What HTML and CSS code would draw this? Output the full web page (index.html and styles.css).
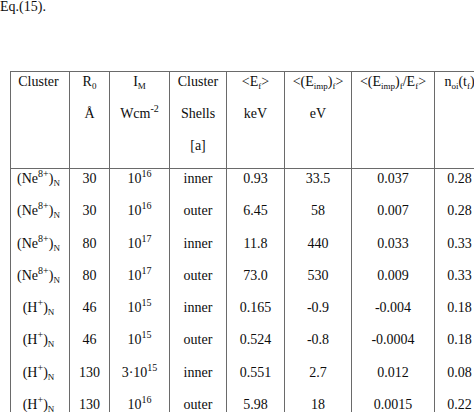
FILE: index.html
```html
<!DOCTYPE html>
<html>
<head>
<meta charset="utf-8">
<link rel="stylesheet" href="styles.css">
</head>
<body>
<div class="eq">Eq.(15).</div>
<table class="tbl">
  <colgroup>
    <col class="c1"><col class="c2"><col class="c3"><col class="c4"><col class="c5"><col class="c6"><col class="c7"><col class="c8">
  </colgroup>
  <thead>
    <tr>
      <th><p>Cluster</p></th>
      <th><p>R<sub>0</sub></p><p>Å</p></th>
      <th><p>I<sub>M</sub></p><p>Wcm<sup>-2</sup></p></th>
      <th><p>Cluster</p><p>Shells</p><p>[a]</p></th>
      <th><p>&lt;E<sub>f</sub>&gt;</p><p>keV</p></th>
      <th><p>&lt;(E<sub>imp</sub>)<sub>f</sub>&gt;</p><p>eV</p></th>
      <th><p>&lt;(E<sub>imp</sub>)<sub>f</sub>/E<sub>f</sub>&gt;</p></th>
      <th><p>n<sub>oi</sub>(t<sub>f</sub>)</p></th>
    </tr>
  </thead>
  <tbody>
    <tr><td>(Ne<sup>8+</sup>)<sub>N</sub></td><td>30</td><td>10<sup>16</sup></td><td>inner</td><td>0.93</td><td>33.5</td><td>0.037</td><td>0.28</td></tr>
    <tr><td>(Ne<sup>8+</sup>)<sub>N</sub></td><td>30</td><td>10<sup>16</sup></td><td>outer</td><td>6.45</td><td>58</td><td>0.007</td><td>0.28</td></tr>
    <tr><td>(Ne<sup>8+</sup>)<sub>N</sub></td><td>80</td><td>10<sup>17</sup></td><td>inner</td><td>11.8</td><td>440</td><td>0.033</td><td>0.33</td></tr>
    <tr><td>(Ne<sup>8+</sup>)<sub>N</sub></td><td>80</td><td>10<sup>17</sup></td><td>outer</td><td>73.0</td><td>530</td><td>0.009</td><td>0.33</td></tr>
    <tr><td>(H<sup>+</sup>)<sub>N</sub></td><td>46</td><td>10<sup>15</sup></td><td>inner</td><td>0.165</td><td>-0.9</td><td>-0.004</td><td>0.18</td></tr>
    <tr><td>(H<sup>+</sup>)<sub>N</sub></td><td>46</td><td>10<sup>15</sup></td><td>outer</td><td>0.524</td><td>-0.8</td><td>-0.0004</td><td>0.18</td></tr>
    <tr><td>(H<sup>+</sup>)<sub>N</sub></td><td>130</td><td>3·10<sup>15</sup></td><td>inner</td><td>0.551</td><td>2.7</td><td>0.012</td><td>0.08</td></tr>
    <tr><td>(H<sup>+</sup>)<sub>N</sub></td><td>130</td><td>10<sup>16</sup></td><td>outer</td><td>5.98</td><td>18</td><td>0.0015</td><td>0.22</td></tr>
  </tbody>
</table>
</body>
</html>
```

FILE: styles.css
```css
html, body {
  margin: 0;
  padding: 0;
  overflow: hidden;
  background: #fff;
}
body {
  font-family: "Liberation Serif", "Times New Roman", serif;
  font-size: 14px;
  color: #0d0d0d;
  width: 474px;
  height: 412px;
}
.eq {
  line-height: 14px;
  height: 14px;
}
.tbl {
  margin-top: 57px;
  margin-left: 10px;
  border-collapse: collapse;
  table-layout: fixed;
  width: 474px;
}
.c1 { width: 59px; }
.c2 { width: 40px; }
.c3 { width: 60px; }
.c4 { width: 57px; }
.c5 { width: 58px; }
.c6 { width: 67px; }
.c7 { width: 83px; }
.c8 { width: 50px; }
.tbl th, .tbl td {
  border-left: 1px solid #6a6a6a;
  border-right: 1px solid #6a6a6a;
  padding: 0;
  text-align: center;
  vertical-align: top;
  font-weight: normal;
  white-space: nowrap;
}
.tbl th {
  border-top: 1px solid #6a6a6a;
  border-bottom: 1px solid #6a6a6a;
  height: 96px;
}
.tbl th p {
  margin: 0;
  line-height: 20px;
  height: 32px;
}
.tbl td {
  line-height: 20px;
  height: 32.3px;
}
.tbl th:first-child, .tbl td:first-child {
  padding-right: 3px;
}
sub, sup {
  line-height: 0;
}
sup {
  font-size: 10px;
  vertical-align: 6px;
}
sub {
  font-size: 9px;
  vertical-align: -3px;
}
```
